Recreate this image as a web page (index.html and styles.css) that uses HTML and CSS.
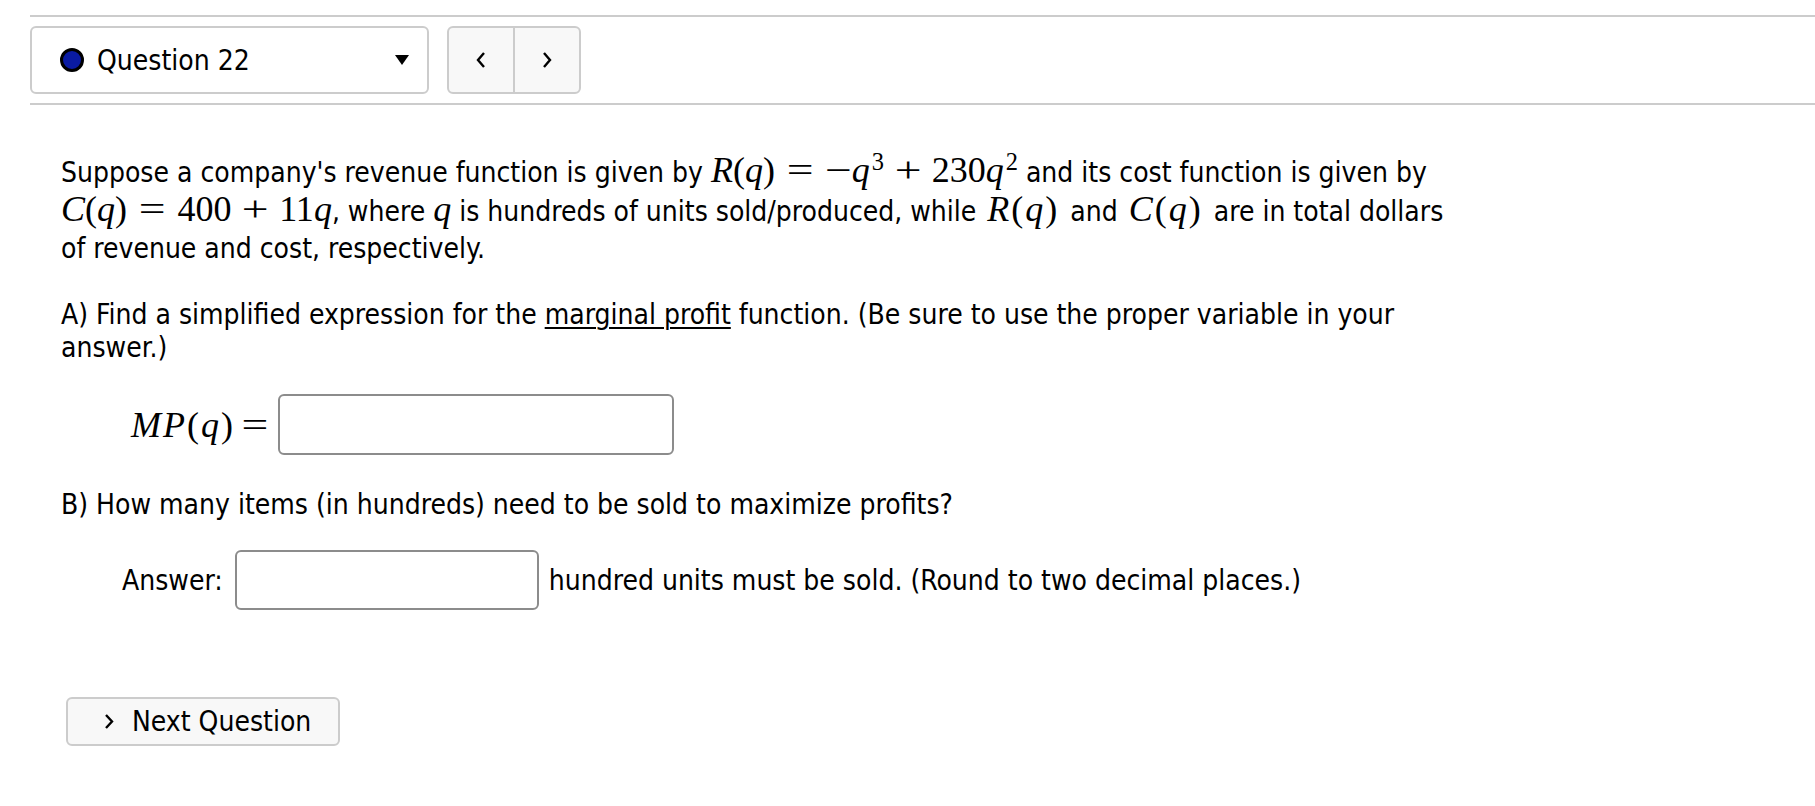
FILE: index.html
```html
<!DOCTYPE html>
<html lang="en">
<head>
<meta charset="utf-8">
<title>Question 22</title>
<link rel="stylesheet" href="styles.css">
</head>
<body>
<div class="page">
  <div class="qnav">
    <div class="qselect">
      <span class="dot"></span>
      <span class="qlabel">Question 22</span>
      <svg class="caret" width="14" height="10" viewBox="0 0 14 10"><polygon points="0,0 14,0 7,10" fill="#000"/></svg>
    </div>
    <div class="arrows">
      <button class="arrow" type="button"><svg width="12" height="18" viewBox="0 0 12 18"><polyline points="9,2 3,9 9,16" fill="none" stroke="#000" stroke-width="2.4"/></svg></button>
      <button class="arrow" type="button"><svg width="12" height="18" viewBox="0 0 12 18"><polyline points="3,2 9,9 3,16" fill="none" stroke="#000" stroke-width="2.4"/></svg></button>
    </div>
  </div>

  <div class="content">
    <p class="stem">Suppose a company's revenue function is given by <span class="math"><i>R</i>(<i>q</i>)<span class="rel">=</span><span class="neg">−</span><i>q</i><sup>3</sup><span class="bin">+</span>230<i>q</i><sup>2</sup></span> and its cost function is given by<br><span class="math"><i>C</i>(<i>q</i>)<span class="rel">=</span>400<span class="bin">+</span>11<i>q</i></span>, where <span class="math"><i>q</i></span> is hundreds of units sold/produced, while <span class="math wide"><i>R</i>(<i>q</i>)</span> and <span class="math wide"><i>C</i>(<i>q</i>)</span> are in total dollars<br>of revenue and cost, respectively.</p>

    <p class="part">A) Find a simplified expression for the <span class="ul">marginal profit</span> function. (Be sure to use the proper variable in your<br>answer.)</p>

    <div class="row mp-row">
      <span class="math mp"><i>MP</i>(<i>q</i>)<span class="rel rel-end">=</span></span>
      <input class="field field-wide" type="text">
    </div>

    <p class="part">B) How many items (in hundreds) need to be sold to maximize profits?</p>

    <div class="row ans-row">
      <span class="ans-label">Answer:</span>
      <input class="field field-short" type="text">
      <span class="ans-after">hundred units must be sold. (Round to two decimal places.)</span>
    </div>

    <button class="next" type="button"><svg width="11" height="17" viewBox="0 0 11 17"><polyline points="3,2 9,8.5 3,15" fill="none" stroke="#000" stroke-width="2.4"/></svg><span>Next Question</span></button>
  </div>
</div>
</body>
</html>
```

FILE: styles.css
```css
html, body {
  margin: 0;
  padding: 0;
  background: #fff;
}

body {
  font-family: "DejaVu Sans Condensed", "DejaVu Sans", sans-serif;
  font-stretch: condensed;
  font-size: 28px;
  color: #000;
}

.page {
  padding: 15px 0 0 30px;
}

/* header navigation */
.qnav {
  display: flex;
  align-items: center;
  border-top: 2px solid #cccccc;
  border-bottom: 2px solid #cccccc;
  padding: 9px 0;
}

.qselect {
  box-sizing: border-box;
  width: 399px;
  height: 68px;
  border: 2px solid #cccccc;
  border-radius: 6px;
  display: flex;
  align-items: center;
  padding: 0 18px 0 28px;
}

.dot {
  box-sizing: border-box;
  width: 24px;
  height: 24px;
  border-radius: 50%;
  border: 3px solid #000;
  background: #0a1ba3;
  flex: none;
}

.qlabel {
  margin-left: 13px;
  flex: 1;
}

.caret {
  flex: none;
}

.arrows {
  margin-left: 18px;
  box-sizing: border-box;
  height: 68px;
  width: 134px;
  border: 2px solid #cccccc;
  border-radius: 6px;
  background: #f8f8f8;
  display: flex;
  overflow: hidden;
}

.arrow {
  flex: 1;
  border: none;
  background: transparent;
  display: flex;
  align-items: center;
  justify-content: center;
  padding: 0;
}

.arrow + .arrow {
  border-left: 2px solid #cccccc;
}

/* content */
.content {
  padding-left: 31px;
  line-height: 33px;
}

.content p {
  margin: 0;
}

.stem {
  margin-top: 49px !important;
}

.part {
  margin-top: 33px !important;
}

.math {
  display: inline-block;
  font-family: "Liberation Serif", "Times New Roman", serif;
  font-stretch: normal;
  font-size: 36px;
  line-height: 32px;
  padding-bottom: 7px;
  white-space: nowrap;
}

.math.wide {
  letter-spacing: 2px;
  margin: 0 3px;
}

.math i {
  font-style: italic;
}

.math sup {
  font-size: 0.68em;
  line-height: 0;
  vertical-align: 0.5em;
  margin-left: 2px;
}

.rel,
.bin,
.neg {
  display: inline-block;
  transform: scaleX(1.32);
}

.rel {
  margin: 0 0.42em;
}

.bin {
  margin: 0 0.38em;
}

.neg {
  margin: 0 3px 0 3px;
}

.ul {
  text-decoration: underline;
  text-decoration-thickness: 2px;
  text-underline-offset: 3px;
}

.row {
  display: flex;
  align-items: center;
  margin-top: 30px;
}

.mp-row {
  padding-left: 70px;
}

.mp {
  letter-spacing: 2px;
  padding-bottom: 0;
}

.rel-end {
  margin: 0 11px 0 10px;
}

.field {
  box-sizing: border-box;
  border: 2px solid #8c8c8c;
  border-radius: 6px;
  background: #fff;
  margin: 0;
  padding: 0 8px;
  font: inherit;
}

.field-wide {
  width: 396px;
  height: 61px;
}

.ans-row {
  padding-left: 61px;
  margin-top: 29px;
}

.ans-label {
  margin-right: 12px;
}

.field-short {
  width: 304px;
  height: 60px;
}

.ans-after {
  margin-left: 10px;
}

.next {
  margin: 87px 0 0 5px;
  box-sizing: border-box;
  width: 274px;
  height: 49px;
  border: 2px solid #cccccc;
  border-radius: 6px;
  background: #f8f8f8;
  font: inherit;
  color: #000;
  display: flex;
  align-items: center;
  padding: 0 0 0 35px;
  gap: 18px;
}
```
